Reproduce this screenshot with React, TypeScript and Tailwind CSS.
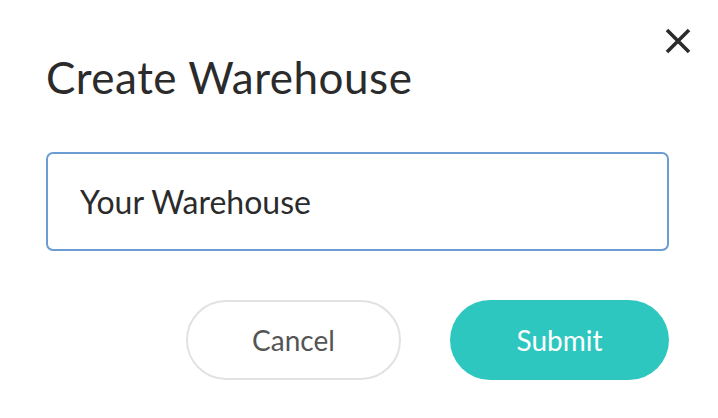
import React from "react";

export default function App() {
  return (
    <div className="relative h-[418px] w-[718px] bg-white font-['Lato',sans-serif] text-[#2b2b2b]">
      <button
        type="button"
        aria-label="Close"
        className="absolute right-[26px] top-[27px] flex h-[28px] w-[28px] items-center justify-center"
      >
        <svg width="28" height="28" viewBox="0 0 28 28" fill="none">
          <path d="M3 3 L25 25 M25 3 L3 25" stroke="#2b2b2b" strokeWidth="3.6" />
        </svg>
      </button>
      <div className="flex flex-col pl-[46px] pr-[49px] pt-[49px]">
        <h1 className="text-[44px] leading-[56px] font-normal tracking-[0.5px]">Create Warehouse</h1>
        <input
          defaultValue="Your Warehouse"
          className="mt-[47px] h-[99px] w-full rounded-[7px] border-2 border-[#6b9dd2] px-[32px] text-[32px] text-[#2b2b2b] outline-none"
        />
        <div className="mt-[49px] flex justify-end gap-[49px]">
          <button
            type="button"
            className="h-[80px] w-[215px] rounded-full border-2 border-[#e2e2e2] bg-white text-[28px] text-[#555555]"
          >
            Cancel
          </button>
          <button
            type="button"
            className="h-[80px] w-[219px] rounded-full bg-[#2ec7c0] text-[28px] text-white"
          >
            Submit
          </button>
        </div>
      </div>
    </div>
  );
}
